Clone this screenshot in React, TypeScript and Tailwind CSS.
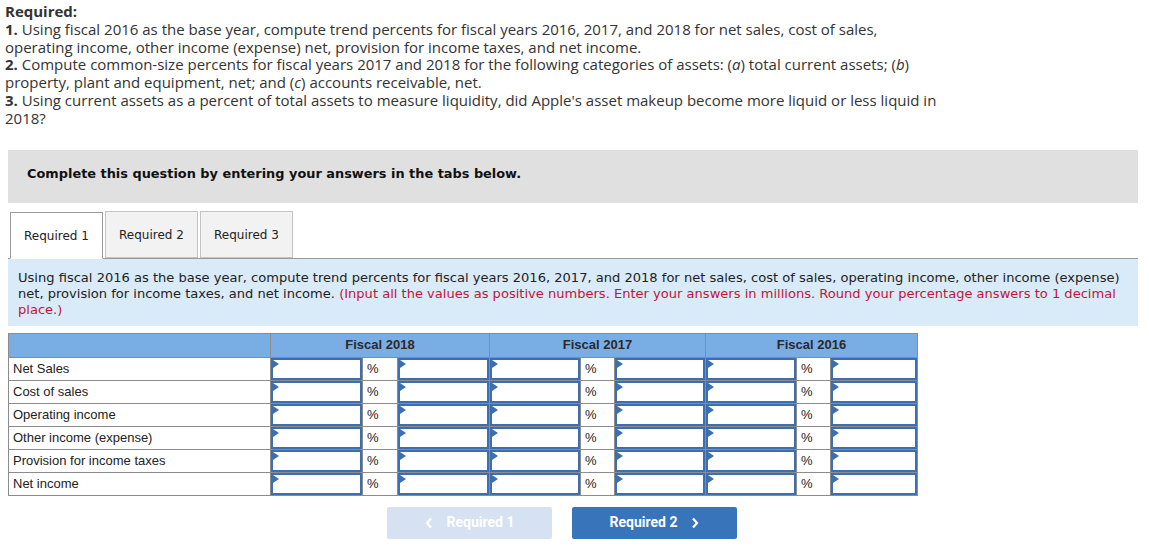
import React from 'react'

const rows = [
  'Net Sales',
  'Cost of sales',
  'Operating income',
  'Other income (expense)',
  'Provision for income taxes',
  'Net income',
]

const years = ['Fiscal 2018', 'Fiscal 2017', 'Fiscal 2016']

function InputCell() {
  return (
    <td className="border border-[#8c8c8c] p-0 h-[22px]">
      <div className="relative h-[22px] border-2 border-[#3c6fb2] bg-white">
        <span className="absolute left-0 top-0 w-0 h-0 border-t-[4px] border-b-[4px] border-l-[6px] border-t-transparent border-b-transparent border-l-[#3c6fb2]" />
      </div>
    </td>
  )
}

export default function App() {
  return (
    <div className="w-[1149px] h-[552px] bg-white overflow-hidden text-[#222]">
      <div className="px-[5px] pt-[3px] font-['Open_Sans',sans-serif] text-[15px] leading-[17.8px] text-[#333]">
        <p className="font-bold">Required:</p>
        <p>
          <b>1.</b> Using fiscal 2016 as the base year, compute trend percents for fiscal years 2016, 2017, and 2018 for net sales, cost of sales,
          <br />
          operating income, other income (expense) net, provision for income taxes, and net income.
        </p>
        <p>
          <b>2.</b> Compute common-size percents for fiscal years 2017 and 2018 for the following categories of assets: (<i>a</i>) total current assets; (<i>b</i>)
          <br />
          property, plant and equipment, net; and (<i>c</i>) accounts receivable, net.
        </p>
        <p>
          <b>3.</b> Using current assets as a percent of total assets to measure liquidity, did Apple's asset makeup become more liquid or less liquid in
          <br />
          2018?
        </p>
      </div>

      <div className="mx-[8px] mt-[22px] w-[1130px] h-[53px] bg-[#e0e0e0] pl-[19px] pt-[14px] font-['DejaVu_Sans',Verdana,sans-serif] font-bold text-[12.9px] text-[#111]">
        Complete this question by entering your answers in the tabs below.
      </div>

      <div className="mx-[8px] mt-[8px] w-[1130px] flex items-end gap-[2px] pl-[2px] border-b border-[#9a9a9a] font-['DejaVu_Sans',Verdana,sans-serif] text-[12px]">
        <div className="w-[93px] h-[47px] -mb-px flex items-center justify-center pt-[1px] bg-white border border-[#9a9a9a] border-b-white">
          Required 1
        </div>
        <div className="w-[93px] h-[47px] flex items-center justify-center pt-[1px] bg-[#f2f2f2] border border-[#c4c4c4]">
          Required 2
        </div>
        <div className="w-[93px] h-[47px] flex items-center justify-center pt-[1px] bg-[#f2f2f2] border border-[#c4c4c4]">
          Required 3
        </div>
      </div>

      <div className="mx-[8px] w-[1130px] h-[67px] bg-[#d9eaf8] pl-[10px] pr-[12px] pt-[11px] font-['DejaVu_Sans',Verdana,sans-serif] text-[13.05px] leading-[16px] text-[#222]">
        Using fiscal 2016 as the base year, compute trend percents for fiscal years 2016, 2017, and 2018 for net sales, cost of sales, operating income, other income (expense) net, provision for income taxes, and net income.{' '}
        <span className="text-[#c3143c]">
          (Input all the values as positive numbers. Enter your answers in millions. Round your percentage answers to 1 decimal place.)
        </span>
      </div>

      <table className="ml-[8px] mt-[7px] table-fixed border-collapse font-['Liberation_Sans',Arial,sans-serif] text-[13px] text-[#222]">
        <colgroup>
          <col className="w-[262px]" />
          <col className="w-[92px]" />
          <col className="w-[35px]" />
          <col className="w-[92px]" />
          <col className="w-[91px]" />
          <col className="w-[34px]" />
          <col className="w-[91px]" />
          <col className="w-[91px]" />
          <col className="w-[34px]" />
          <col className="w-[87px]" />
        </colgroup>
        <thead>
          <tr className="h-[24px] bg-[#7aade3]">
            <th className="border border-[#8c8c8c]" />
            {years.map((y) => (
              <th key={y} colSpan={3} className="border border-[#8c8c8c] font-bold text-[13px] text-[#2a2a2a]">
                {y}
              </th>
            ))}
          </tr>
        </thead>
        <tbody>
          {rows.map((r) => (
            <tr key={r} className="h-[22px]">
              <td className="border border-[#8c8c8c] pl-[4px] bg-white leading-[22px]">{r}</td>
              {years.map((y) => (
                <React.Fragment key={y}>
                  <InputCell />
                  <td className="border border-[#8c8c8c] pl-[4px] bg-white leading-[22px]">%</td>
                  <InputCell />
                </React.Fragment>
              ))}
            </tr>
          ))}
        </tbody>
      </table>

      <div className="mt-[11px] ml-[387px] flex gap-[20px] font-['Roboto',sans-serif] font-bold text-[14px]">
        <button className="w-[165px] h-[32px] rounded-[2px] bg-[#d6e2f1] text-white flex items-center justify-center gap-[14px]">
          <svg width="8" height="12" viewBox="0 0 8 12" fill="none" stroke="white" strokeWidth="2.2">
            <path d="M6 1.5 L2 6 L6 10.5" />
          </svg>
          Required 1
        </button>
        <button className="w-[165px] h-[32px] rounded-[2px] bg-[#3874b9] text-white flex items-center justify-center gap-[14px]">
          Required 2
          <svg width="8" height="12" viewBox="0 0 8 12" fill="none" stroke="white" strokeWidth="2.2">
            <path d="M2 1.5 L6 6 L2 10.5" />
          </svg>
        </button>
      </div>
    </div>
  )
}
